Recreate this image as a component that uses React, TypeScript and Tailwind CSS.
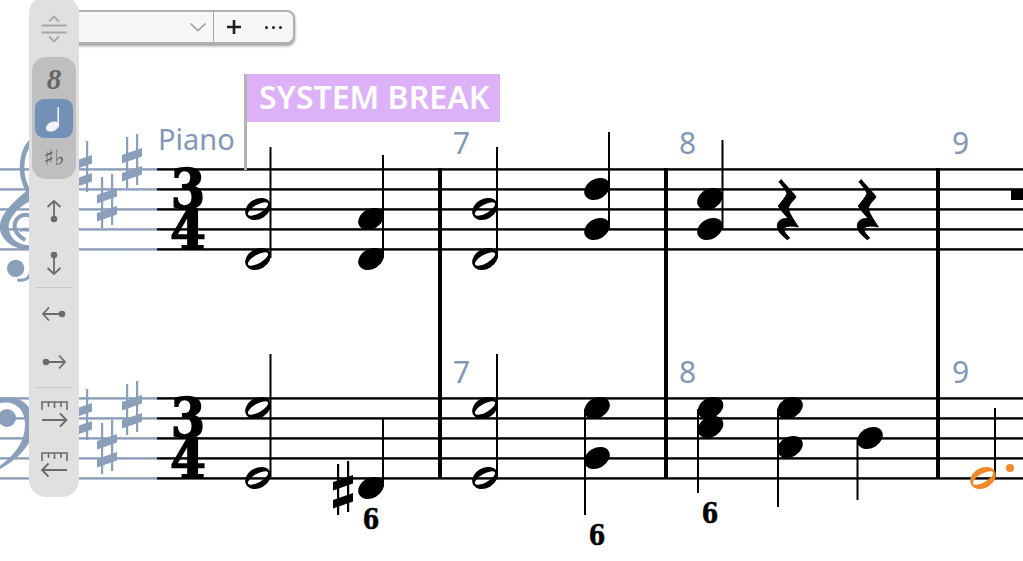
import React from "react";

const BLUE = "#8a9fba";

// ellipse as a closed path, so open noteheads can punch a hole with evenodd
function ell(cx: number, cy: number, rx: number, ry: number, deg: number) {
  const a = (deg * Math.PI) / 180;
  const dx = rx * Math.cos(a);
  const dy = rx * Math.sin(a);
  return `M${cx - dx} ${cy - dy}A${rx} ${ry} ${deg} 1 0 ${cx + dx} ${cy + dy}A${rx} ${ry} ${deg} 1 0 ${cx - dx} ${cy - dy}Z`;
}

function Head({ x, y, open, color = "#000" }: { x: number; y: number; open?: boolean; color?: string }) {
  const d = open
    ? ell(x, y, 13.6, 10, -30) + ell(x, y, 11.4, 4.2, -30)
    : ell(x, y, 13.6, 10, -30);
  return <path d={d} fill={color} fillRule="evenodd" />;
}

function Stem({ x, y1, y2 }: { x: number; y1: number; y2: number }) {
  return <line x1={x} x2={x} y1={y1} y2={y2} stroke="#000" strokeWidth={2} />;
}

function Sharp({ x, y, color }: { x: number; y: number; color: string }) {
  return (
    <g transform={`translate(${x} ${y})`} fill={color}>
      <rect x={-6} y={-24} width={2.2} height={51} />
      <rect x={4} y={-27} width={2.2} height={51} />
      <path d="M-10 -6L10 -13V-4.5L-10 2.5Z" />
      <path d="M-10 12L10 5V13.5L-10 20.5Z" />
    </g>
  );
}

function Rest({ dx }: { dx: number }) {
  return (
    <path
      transform={`translate(${660 + dx} 120) scale(0.3333)`}
      d="M357 185L364 179C372 190 398 215 408 231C398 245 386 252 385 268C390 285 405 305 415 321C400 318 378 315 372 326C372 338 382 346 389 354L382 359C368 348 352 335 352 318C352 302 368 293 386 296C375 285 362 270 355 258C364 245 378 232 381 220C376 207 366 197 357 185Z"
      fill="#000"
      stroke="#000"
      strokeWidth={3}
    />
  );
}

function TimeSig({ y }: { y: number }) {
  return (
    <g className="font-['DejaVu_Serif'] font-bold fill-black" stroke="#000" strokeWidth={1.5} textAnchor="middle" fontSize={55}>
      <text transform={`translate(188 ${y + 39}) scale(0.9 1)`}>3</text>
      <text transform={`translate(188 ${y + 80}) scale(0.94 1)`}>4</text>
    </g>
  );
}

function Fingering({ x, y }: { x: number; y: number }) {
  return (
    <text transform={`translate(${x} ${y}) scale(0.88 1)`} textAnchor="middle" fontSize={27} stroke="#000" strokeWidth={0.6} className="font-['DejaVu_Serif'] font-bold fill-black">
      6
    </text>
  );
}

function BarNumber({ x, y, n }: { x: number; y: number; n: string }) {
  return (
    <text x={x} y={y} fontSize={30} className="font-['Noto_Sans'] fill-[#8197b5]">
      {n}
    </text>
  );
}

const staffY = [169, 398];
const barlines = [440, 666, 938];

function Score() {
  return (
    <svg className="absolute inset-0" width={1023} height={561} viewBox="0 0 1023 561">
      {staffY.map((top) =>
        [0, 1, 2, 3, 4].map((i) => (
          <g key={`${top}-${i}`}>
            <rect x={0} y={top + i * 20 - 0.8} width={157} height={2.4} fill={BLUE} />
            <rect x={157} y={top + i * 20 - 0.8} width={866} height={2.4} fill="#000" />
          </g>
        ))
      )}
      {barlines.map((x) => (
        <rect key={x} x={x - 2} y={168} width={4} height={311} fill="#000" />
      ))}

      {/* treble clef, traced in 3x crop units, only its left part shows beside the palette */}
      <g transform="translate(0 130) scale(0.3333)">
        <path fill="none" stroke={BLUE} strokeWidth={14} d="M92 36C72 56 62 96 68 136C72 160 80 176 92 196" />
        <path
          fill={BLUE}
          d="M92 172C60 200 -6 250 0 296C4 334 48 362 92 358L92 346C56 346 30 328 26 294C24 262 60 228 92 212Z"
        />
        <path fill="none" stroke={BLUE} strokeWidth={12} d="M92 258C64 246 42 268 44 292C46 310 60 322 76 330" />
        <path fill={BLUE} d="M92 296C74 290 60 296 58 308C64 302 78 304 92 306Z" />
        <circle cx={47} cy={415} r={26} fill={BLUE} />
        <path fill="none" stroke={BLUE} strokeWidth={9} d="M92 420C92 436 86 454 52 450" />
      </g>

      {/* bass clef */}
      <path fill={BLUE} d="M0 398C20 394 34 406 34 424C34 446 14 462 -2 470L-2 467C12 458 25 444 25 424C25 408 14 400 0 403Z" />
      <circle cx={7} cy={418} r={9} fill={BLUE} />

      <Sharp x={82} y={168} color={BLUE} />
      <Sharp x={107} y={201} color={BLUE} />
      <Sharp x={132} y={161} color={BLUE} />
      <Sharp x={82} y={416} color={BLUE} />
      <Sharp x={107} y={447} color={BLUE} />
      <Sharp x={132} y={408} color={BLUE} />

      <TimeSig y={169} />
      <TimeSig y={398} />

      {/* upper staff */}
      <Stem x={270.5} y1={147} y2={258} />
      <Head x={258} y={209} open />
      <Head x={258} y={259} open />
      <Stem x={383} y1={155} y2={258} />
      <Head x={371} y={219} />
      <Head x={371} y={259} />
      <Stem x={497} y1={147} y2={258} />
      <Head x={485} y={209} open />
      <Head x={485} y={259} open />
      <Stem x={609} y1={132} y2={228} />
      <Head x={597} y={189} />
      <Head x={597} y={229} />
      <Stem x={722.5} y1={140} y2={228} />
      <Head x={710} y={199} />
      <Head x={710} y={229} />
      <Rest dx={0} />
      <Rest dx={80} />
      <rect x={1011} y={189} width={12} height={11} fill="#000" />

      {/* lower staff */}
      <Stem x={270.5} y1={354} y2={477} />
      <Head x={258} y={408} open />
      <Head x={258} y={478} open />
      <Stem x={383} y1={418} y2={487} />
      <Head x={371} y={488} />
      <Sharp x={343} y={488} color="#000" />
      <Fingering x={371} y={529} />
      <Stem x={497} y1={354} y2={477} />
      <Head x={485} y={408} open />
      <Head x={485} y={478} open />
      <Stem x={585} y1={409} y2={515} />
      <Head x={597} y={408} />
      <Head x={597} y={458} />
      <Fingering x={597} y={545} />
      <Stem x={698} y1={409} y2={493} />
      <Head x={710.5} y={408} />
      <Head x={710.5} y={427} />
      <Fingering x={710} y={523} />
      <Stem x={778} y1={409} y2={507} />
      <Head x={790} y={408} />
      <Head x={790} y={447} />
      <Stem x={857.5} y1={439} y2={500} />
      <Head x={870} y={438} />
      <Stem x={995} y1={408} y2={477} />
      <Head x={983} y={478} open color="#ef8a2c" />
      <circle cx={1010} cy={468} r={4} fill="#ef8a2c" />

      <BarNumber x={453} y={154} n="7" />
      <BarNumber x={679} y={154} n="8" />
      <BarNumber x={952} y={154} n="9" />
      <BarNumber x={453} y={383} n="7" />
      <BarNumber x={679} y={383} n="8" />
      <BarNumber x={952} y={383} n="9" />
      <text x={158} y={150} fontSize={29} className="font-['Noto_Sans'] fill-[#8197b5]">
        Piano
      </text>
    </svg>
  );
}

function Dot({ cx, cy }: { cx: number; cy: number }) {
  return <circle cx={cx} cy={cy} r={3.3} fill="#6b6b6b" stroke="none" />;
}

function Icon({ children, className = "" }: { children: React.ReactNode; className?: string }) {
  return (
    <svg className={`block shrink-0 ${className}`} width={36} height={36} viewBox="0 0 36 36" fill="none" stroke="#6b6b6b" strokeWidth={1.8}>
      {children}
    </svg>
  );
}

const Ruler = ({ y }: { y: number }) => (
  <path d={`M6 ${y + 8}V${y}H31V${y + 8}M12.5 ${y}V${y + 5}M18.5 ${y}V${y + 6}M25 ${y}V${y + 5}`} strokeWidth={1.6} />
);

function Toolbar() {
  return (
    <div className="absolute left-[29px] top-[-4px] w-[50px] h-[501px] bg-[#e0e0e0] rounded-[17px] flex flex-col items-center">
      <div className="h-[61px] shrink-0 flex items-center justify-center pt-[4px]">
        <svg width={28} height={28} viewBox="0 0 28 28" fill="none" stroke="#a6a6a6" strokeWidth={1.8}>
          <path d="M9 6.5L14 1.5L19 6.5" />
          <path d="M1.5 10.5H26.5M1.5 17.5H26.5" />
          <path d="M9 21.5L14 26.5L19 21.5" />
        </svg>
      </div>
      <div className="w-[44px] h-[122px] shrink-0 bg-[#bfbfbf] rounded-[14px] flex flex-col items-center pt-[3px]">
        <div className="h-[39px] flex items-center justify-center font-['Liberation_Serif'] font-bold italic text-[29px] text-[#666666]">
          8
        </div>
        <div className="w-[38px] h-[39px] rounded-[9px] bg-[#7391b7] flex items-center justify-center">
          <svg width={20} height={26} viewBox="0 0 20 26">
            <rect x={13.4} y={1} width={1.6} height={20} fill="#f2f2f2" />
            <path d={ell(8.5, 20.5, 7, 4.6, -25)} fill="#f2f2f2" />
          </svg>
        </div>
        <div className="h-[38px] flex items-center justify-center font-['DejaVu_Sans'] text-[22px] text-[#5f5f5f]">
          ♯♭
        </div>
      </div>
      <Icon className="mt-[14px]">
        <path d="M11.5 14L18 8L24.5 14M18 8.5V26" />
        <Dot cx={18} cy={26} />
      </Icon>
      <Icon className="mt-[17px]">
        <path d="M11.5 22L18 28L24.5 22M18 27.5V9" />
        <Dot cx={18} cy={9} />
      </Icon>
      <div className="w-[36px] h-px shrink-0 bg-[#c6c6c6] mt-[5px]" />
      <Icon className="mt-[8px]">
        <path d="M13 11.5L7 18L13 24.5M7.5 18H26" />
        <Dot cx={26} cy={18} />
      </Icon>
      <Icon className="mt-[12px]">
        <path d="M23 11.5L29 18L23 24.5M28.5 18H10" />
        <Dot cx={10} cy={18} />
      </Icon>
      <div className="w-[36px] h-px shrink-0 bg-[#c6c6c6] mt-[7px]" />
      <Icon className="mt-[10px]">
        <Ruler y={4} />
        <path d="M6 22H30M24 15.5L30.5 22L24 28.5" />
      </Icon>
      <Icon className="mt-[14px]">
        <Ruler y={5} />
        <path d="M6.5 22H31M12.5 15.5L6 22L12.5 28.5" />
      </Icon>
    </div>
  );
}

function TopBar() {
  return (
    <div className="absolute left-[60px] top-[10px] w-[235px] h-[34px] bg-[#f7f7f7] border-2 border-[#b0b0b0] rounded-[8px] shadow-[0_2px_3px_rgba(0,0,0,0.4)] flex items-stretch">
      <div className="w-[152px] border-r border-[#a8a8a8] flex items-center justify-end pr-[6px]">
        <svg width={18} height={10} viewBox="0 0 18 10" fill="none" stroke="#a0a0a0" strokeWidth={1.7}>
          <path d="M1.5 1.5L9 8.5L16.5 1.5" />
        </svg>
      </div>
      <div className="flex-1 flex items-center pl-[12px] gap-[23px]">
        <svg width={16} height={16} viewBox="0 0 16 16" stroke="#1f1f1f" strokeWidth={2.6}>
          <path d="M8 1V15M1 8H15" />
        </svg>
        <div className="flex gap-[4px]">
          <span className="w-[3px] h-[3px] rounded-full bg-[#222222]" />
          <span className="w-[3px] h-[3px] rounded-full bg-[#222222]" />
          <span className="w-[3px] h-[3px] rounded-full bg-[#222222]" />
        </div>
      </div>
    </div>
  );
}

function SystemBreak() {
  return (
    <div className="absolute left-[244px] top-[74px] flex items-start">
      <div className="w-[3px] h-[96px] bg-[#b3b3b3]" />
      <div className="w-[253px] h-[48px] bg-[#dcb1f7] flex items-center pl-[12px] pb-[3px] font-['Noto_Sans'] font-semibold text-[32px] text-white whitespace-nowrap">
        SYSTEM BREAK
      </div>
    </div>
  );
}

export default function App() {
  return (
    <div className="relative w-[1023px] h-[561px] bg-white overflow-hidden font-['Noto_Sans',sans-serif]">
      <Score />
      <SystemBreak />
      <TopBar />
      <Toolbar />
    </div>
  );
}
